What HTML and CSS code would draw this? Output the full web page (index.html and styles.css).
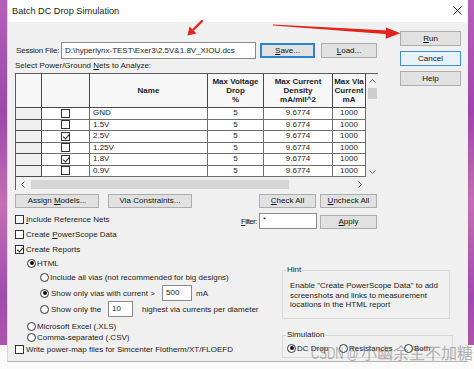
FILE: index.html
```html
<!DOCTYPE html>
<html>
<head>
  <title>Batch DC Drop Simulation</title>
  <link rel="stylesheet" href="styles.css">
</head>
<body>

  <div class="dialog">
    <div class="titlebar">
      <span class="title">Batch DC Drop Simulation</span>
      <svg class="close" width="9" height="9" viewBox="0 0 9 9"><path d="M0.5 0.5L8.5 8.5M8.5 0.5L0.5 8.5" stroke="#222" stroke-width="1"/></svg>
    </div>

    <div class="top">
      <!-- Left: session + nets grid -->
      <div class="main">
        <div class="session">
          <span class="session-label">Session File:</span>
          <div class="field session-field">D:\hyperlynx-TEST\Exer3\2.5V&amp;1.8V_XIOU.dcs</div>
          <button class="btn btn-default save"><u>S</u>ave...</button>
          <button class="btn load"><u>L</u>oad...</button>
        </div>

        <div class="caption">Select Power/Ground <u>N</u>ets to Analyze:</div>

        <div class="grid">
          <div class="cells">
            <table>
              <colgroup>
                <col style="width:26px"><col style="width:48px"><col style="width:118px">
                <col style="width:56px"><col style="width:69px"><col style="width:33px">
              </colgroup>
              <thead>
                <tr>
                  <th></th><th></th><th>Name</th>
                  <th>Max Voltage<br>Drop<br>%</th>
                  <th>Max Current<br>Density<br>mA/mil^2</th>
                  <th>Max Via<br>Current<br>mA</th>
                </tr>
              </thead>
              <tbody>
                <tr><td class="rh"></td><td class="ck"><span class="check"></span></td><td class="name">GND</td><td>5</td><td>9.6774</td><td>1000</td></tr>
                <tr><td class="rh"></td><td class="ck"><span class="check"></span></td><td class="name">1.5V</td><td>5</td><td>9.6774</td><td>1000</td></tr>
                <tr><td class="rh"></td><td class="ck"><span class="check on"></span></td><td class="name">2.5V</td><td>5</td><td>9.6774</td><td>1000</td></tr>
                <tr><td class="rh"></td><td class="ck"><span class="check"></span></td><td class="name">1.25V</td><td>5</td><td>9.6774</td><td>1000</td></tr>
                <tr><td class="rh"></td><td class="ck"><span class="check on"></span></td><td class="name">1.8V</td><td>5</td><td>9.6774</td><td>1000</td></tr>
                <tr><td class="rh"></td><td class="ck"><span class="check"></span></td><td class="name">0.9V</td><td>5</td><td>9.6774</td><td>1000</td></tr>
              </tbody>
            </table>
          </div>
          <div class="vscroll">
            <span class="arrow"><svg width="7" height="4" viewBox="0 0 7 4"><path d="M0.5 3.5L3.5 0.5L6.5 3.5" fill="none" stroke="#606060"/></svg></span>
            <span class="vthumb"></span>
            <span class="spacer"></span>
            <span class="arrow"><svg width="7" height="4" viewBox="0 0 7 4"><path d="M0.5 0.5L3.5 3.5L6.5 0.5" fill="none" stroke="#606060"/></svg></span>
          </div>
          <div class="hscroll">
            <span class="arrow"><svg width="4" height="7" viewBox="0 0 4 7"><path d="M3.5 0.5L0.5 3.5L3.5 6.5" fill="none" stroke="#606060"/></svg></span>
            <span class="hthumb"></span>
            <span class="spacer"></span>
            <span class="arrow"><svg width="4" height="7" viewBox="0 0 4 7"><path d="M0.5 0.5L3.5 3.5L0.5 6.5" fill="none" stroke="#606060"/></svg></span>
          </div>
          <div class="corner"></div>
        </div>

        <div class="actions">
          <button class="btn wide">Assign <u>M</u>odels...</button>
          <button class="btn wide via">Via Constraints...</button>
          <button class="btn small check-all"><u>C</u>heck All</button>
          <button class="btn small uncheck-all"><u>U</u>ncheck All</button>
        </div>
      </div>

      <!-- Right: dialog buttons -->
      <div class="side">
        <button class="btn side-btn"><u>R</u>un</button>
        <button class="btn side-btn btn-focus">Cancel</button>
        <button class="btn side-btn">Help</button>
      </div>
    </div>

    <div class="bottom">
      <div class="options">
        <div class="opt h15"><span class="check"></span><span><u>I</u>nclude Reference Nets</span></div>
        <div class="opt h15"><span class="check"></span><span>Create <u>P</u>owerScope Data</span></div>
        <div class="opt h14"><span class="check on"></span><span>Create Reports</span></div>
        <div class="opt h14 lvl1"><span class="radio on"></span><span>HTML</span></div>
        <div class="opt h15 lvl2"><span class="radio"></span><span>Include all vias (not recommended for big designs)</span></div>
        <div class="opt h16 lvl2">
          <span class="radio on"></span><span class="txt-vias">Show only vias with current &gt;</span>
          <div class="field num num-500">500</div><span>mA</span>
        </div>
        <div class="opt h16 lvl2">
          <span class="radio"></span><span class="txt-only">Show only the</span>
          <div class="field num num-10">10</div><span>highest via currents per diameter</span>
        </div>
        <div class="opt h12 lvl1 gap3"><span class="radio"></span><span>Microsoft Excel (.XLS)</span></div>
        <div class="opt h11 lvl1"><span class="radio"></span><span>Comma-separated (.CSV)</span></div>
        <div class="opt h13"><span class="check"></span><span>Write power-map files for Simcenter Flotherm/XT/FLOEFD</span></div>
      </div>

      <div class="right">
        <div class="filter-row">
          <span class="filter-label"><u>F</u>ilter:</span>
          <div class="field filter-field">*</div>
          <button class="btn small apply"><u>A</u>pply</button>
        </div>

        <fieldset class="group hint">
          <legend>Hint</legend>
          <p>Enable "Create PowerScope Data" to add<br>screenshots and links to measurement<br>locations in the HTML report</p>
        </fieldset>

        <fieldset class="group simulation">
          <legend>Simulation</legend>
          <div class="sim-row">
            <span class="sim-item dc"><span class="radio on"></span><span>DC Drop</span></span>
            <span class="sim-item res"><span class="radio"></span><span>Resistances</span></span>
            <span class="sim-item"><span class="radio"></span><span>Both</span></span>
          </div>
        </fieldset>
      </div>
    </div>
  </div>

  <!-- annotation arrows drawn over the screenshot -->
  <svg class="arrows" width="474" height="369" viewBox="0 0 474 369">
    <path d="M202 21L193.5 29.5" stroke="#e3241d" stroke-width="2.4" stroke-linecap="round"/>
    <polygon points="187.5,35.5 189.5,26.5 196.5,33.5" fill="#e3241d"/>
    <polygon points="273,24.6 388,30.6 387.6,34.2 273,25.6" fill="#e3241d"/>
    <polygon points="400.5,33.2 386,27.6 385.6,38.8" fill="#e3241d"/>
  </svg>

  <div class="watermark"><span class="wm-latin">CSDN @</span>小幽余生不加糖</div>

</body>
</html>
```

FILE: styles.css
```css
* {
  box-sizing: border-box;
}

body {
  margin: 0;
  width: 474px;
  height: 369px;
  overflow: hidden;
  position: relative;
  font-family: 'Liberation Sans', Arial, sans-serif;
  font-size: 8px;
  color: #1c1c1c;
  background:
    linear-gradient(to bottom, transparent 345px, #fafafa 345px),
    linear-gradient(to bottom, #b361b8, #9b48a9 30%, #c26fb6 55%, #a04cae 80%, #b45aa8);
}

u {
  text-decoration: underline;
  text-underline-offset: 1px;
}

.dialog {
  margin-left: 7px;
  width: 461px;
  height: 362px;
  background: #f0f0f0;
  border-bottom: 1px solid #b4b4b4;
  border-left: 1px solid #d8d8d8;
}

.titlebar {
  height: 22px;
  background: #fff;
  display: flex;
  align-items: center;
  padding-left: 4px;
}

.title {
  flex: 1;
  font-size: 9.2px;
  color: #222;
}

.close {
  margin-right: 6px;
  margin-top: -1px;
}

/* ---------- top part ---------- */
.top {
  display: flex;
  padding-left: 7px;
}

.main {
  width: 363px;
}

.side {
  margin-left: 22px;
  width: 61px;
  padding-top: 9px;
  display: flex;
  flex-direction: column;
  gap: 5px;
}

.btn {
  font: inherit;
  color: #111;
  padding: 0;
  margin: 0;
  background: #e1e1e1;
  border: 1px solid #adadad;
  height: 15px;
  line-height: 12px;
  text-align: center;
  white-space: nowrap;
}

.btn-default {
  border: 2px solid #2a84d2;
  line-height: 11px;
}

.btn-focus {
  background: #e8f2fb;
  border-color: #3d8fd6;
}

.side-btn {
  width: 61px;
}

.session {
  display: flex;
  align-items: center;
  margin-top: 20px;
  height: 17px;
  white-space: nowrap;
}

.session-label {
  width: 46px;
  padding-left: 1px;
  letter-spacing: -0.2px;
}

.field {
  background: #fff;
  border: 1px solid #8a8a8a;
  height: 17px;
  line-height: 15px;
  padding-left: 3px;
  white-space: nowrap;
  overflow: hidden;
  flex: none;
}

.session-field {
  width: 195px;
}

.save {
  width: 55px;
  margin-left: 4px;
}

.load {
  width: 56px;
  margin-left: 6px;
}

.caption {
  margin-top: 2px;
  height: 10px;
  line-height: 10px;
}

/* ---------- nets grid ---------- */
.grid {
  margin-top: 2px;
  width: 363px;
  height: 117px;
  display: grid;
  grid-template-columns: 350px 13px;
  grid-template-rows: 104px 13px;
  border-left: 1px solid #5a5a5a;
  border-top: 1px solid #5a5a5a;
}

.cells {
  overflow: hidden;
  background: #f0f0f0;
}

table {
  border-collapse: collapse;
  table-layout: fixed;
  width: 350px;
  margin-left: -1px;
  margin-top: -1px;
}

th {
  height: 34px;
  background: #f7f7f7;
  border: 1px solid #4a4a4a;
  font-weight: bold;
  line-height: 9px;
  padding: 0;
  text-align: center;
  vertical-align: middle;
  white-space: nowrap;
  overflow: hidden;
}

td {
  height: 11.5px;
  padding: 0;
  background: #fff;
  border: 1px solid #707070;
  line-height: 10px;
  text-align: center;
  white-space: nowrap;
  overflow: hidden;
}

td.rh {
  background: #f0f0f0;
  border-color: #4a4a4a;
}

td.name {
  text-align: left;
  padding-left: 3px;
}

td.ck .check {
  vertical-align: middle;
  margin: 0;
}

.vscroll, .hscroll {
  display: flex;
  background: #f0f0f0;
}

.vscroll {
  flex-direction: column;
  align-items: center;
}

.hscroll {
  align-items: center;
}

.arrow {
  width: 13px;
  height: 13px;
  display: flex;
  align-items: center;
  justify-content: center;
  flex: none;
}

.spacer {
  flex: 1;
}

.vthumb {
  width: 9px;
  height: 11px;
  margin-top: 1px;
  background: #cdcdcd;
}

.hthumb {
  width: 258px;
  height: 9px;
  margin-left: 2px;
  background: #d6d6d6;
}

.corner {
  background: #f0f0f0;
}

.actions {
  display: flex;
  margin-top: 4px;
  height: 14px;
}

.actions .btn {
  height: 14px;
  line-height: 12px;
}

.wide {
  width: 84px;
}

.via {
  margin-left: 9px;
}

.small {
  width: 57px;
}

.check-all {
  margin-left: auto;
}

.uncheck-all {
  margin-left: 4px;
  margin-right: 1px;
}

/* ---------- check boxes & radios ---------- */
.check {
  display: inline-block;
  width: 9px;
  height: 9px;
  border: 1px solid #333;
  background: #fff;
  margin-right: 2px;
  position: relative;
  flex: none;
}

.check.on::after {
  content: "";
  position: absolute;
  left: 2px;
  top: 0px;
  width: 3px;
  height: 5px;
  border-right: 1px solid #222;
  border-bottom: 1px solid #222;
  transform: rotate(40deg);
}

.radio {
  display: inline-block;
  width: 9px;
  height: 9px;
  border: 1px solid #333;
  border-radius: 50%;
  background: #fff;
  margin-right: 1px;
  position: relative;
  flex: none;
}

.radio.on::after {
  content: "";
  position: absolute;
  left: 1.5px;
  top: 1.5px;
  width: 4px;
  height: 4px;
  border-radius: 50%;
  background: #111;
}

/* ---------- bottom part ---------- */
.bottom {
  display: grid;
  grid-template-columns: 226px 1fr;
  padding-left: 7px;
}

.options {
  padding-top: 4px;
  white-space: nowrap;
}

.opt {
  display: flex;
  align-items: center;
}

.h11 { height: 11px; }
.h12 { height: 12px; }
.h13 { height: 13px; }
.h14 { height: 14px; }
.h15 { height: 15px; }
.h16 { height: 16px; }

.gap3 {
  margin-top: 3px;
}

.lvl1 {
  padding-left: 12px;
}

.lvl2 {
  padding-left: 25px;
}

.txt-vias {
  width: 112px;
  padding-left: 1px;
  flex: none;
}

.txt-only {
  width: 58px;
  padding-left: 1px;
  flex: none;
}

.num {
  height: 16px;
  line-height: 14px;
}

.num-500 {
  width: 30px;
  margin-right: 4px;
}

.num-10 {
  width: 25px;
  margin-right: 9px;
}

.right {
  white-space: nowrap;
}

.filter-row {
  display: flex;
  align-items: center;
  margin-top: 5px;
  height: 16px;
}

.filter-label {
  width: 18px;
  flex: none;
  letter-spacing: -0.6px;
}

.filter-field {
  width: 58px;
  height: 16px;
  line-height: 12px;
}

.apply {
  margin-left: 3px;
  height: 14px;
  line-height: 12px;
  margin-top: 2px;
}

.group {
  margin: 0 0 0 41px;
  padding: 0;
  border: 1px solid #d8d8d8;
  min-width: 0;
}

.group legend {
  padding: 0 1px;
  margin-left: 3px;
  line-height: 8px;
  height: 8px;
}

.hint {
  margin-top: 37px;
  width: 168px;
  height: 53px;
}

.hint p {
  margin: 7px 0 0 7px;
  line-height: 9.5px;
}

.simulation {
  margin-top: 12px;
  width: 171px;
  height: 27px;
}

.sim-row {
  display: flex;
  align-items: center;
  padding-left: 4px;
  margin-top: 4px;
  height: 10px;
}

.sim-item {
  display: flex;
  align-items: center;
}

.dc {
  width: 52px;
}

.res {
  width: 65px;
}

/* ---------- overlays ---------- */
.arrows {
  position: absolute;
  left: 0;
  top: 0;
  pointer-events: none;
}

.watermark {
  position: absolute;
  left: 311px;
  top: 343px;
  font-family: 'Noto Sans CJK SC', sans-serif;
  font-size: 16px;
  line-height: 19px;
  color: rgba(110, 110, 110, 0.5);
  white-space: nowrap;
}

.wm-latin {
  display: inline-block;
  font-family: 'Liberation Sans', sans-serif;
  font-size: 16px;
  transform: scaleX(0.72);
  transform-origin: left center;
  margin-right: -16px;
}
```
